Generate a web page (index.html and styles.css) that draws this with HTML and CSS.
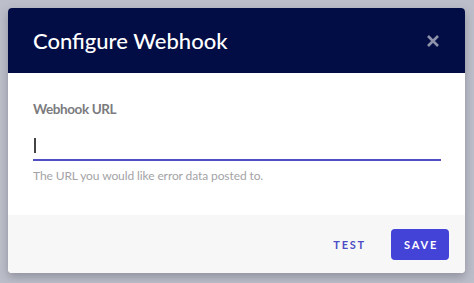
FILE: index.html
```html
<!DOCTYPE html>
<html>
<head>
<meta charset="utf-8">
<link rel="stylesheet" href="styles.css">
</head>
<body>
<div class="modal">
  <div class="modal-header">
    <h1 class="modal-title">Configure Webhook</h1>
    <button class="close-btn" aria-label="Close">
      <svg width="14" height="14" viewBox="0 0 14 14"><path d="M2 2 L12 12 M12 2 L2 12" stroke="#8e92ab" stroke-width="2.6" stroke-linecap="butt"/></svg>
    </button>
  </div>
  <div class="modal-body">
    <label class="field-label">Webhook URL</label>
    <div class="input-wrap"><span class="caret"></span></div>
    <p class="help">The URL you would like error data posted to.</p>
  </div>
  <div class="modal-footer">
    <button class="btn-text">TEST</button>
    <button class="btn-primary">SAVE</button>
  </div>
</div>
</body>
</html>
```
FILE: styles.css
```css
html, body {
  margin: 0;
  padding: 0;
}
body {
  background: #bcbec9;
  font-family: Lato, "Open Sans", "Liberation Sans", sans-serif;
  width: 474px;
  height: 283px;
  overflow: hidden;
  padding-top: 8px;
  box-sizing: border-box;
}
.modal {
  margin: 0 9px 0 8px;
  width: 457px;
  border-radius: 4px;
  overflow: hidden;
  background: #fff;
  box-shadow: 0 4px 10px rgba(60, 62, 80, 0.35);
}
.modal-header {
  height: 65px;
  background: #020d45;
  display: flex;
  align-items: center;
  justify-content: space-between;
  padding: 0 25px;
  box-sizing: border-box;
}
.modal-title {
  margin: 0;
  color: #fff;
  font-size: 22px;
  font-weight: 500;
  letter-spacing: 0;
}
.close-btn {
  background: none;
  border: 0;
  padding: 0;
  width: 14px;
  height: 14px;
  display: flex;
}
.modal-body {
  height: 142px;
  box-sizing: border-box;
  padding: 28px 24px 0 25px;
}
.field-label {
  display: block;
  font-size: 13.5px;
  font-weight: 700;
  color: #7b7b7e;
  line-height: 17px;
  letter-spacing: -0.4px;
}
.input-wrap {
  margin-top: 10px;
  height: 31px;
  border-bottom: 2px solid #4f4fc4;
  display: flex;
  align-items: center;
}
.caret {
  display: block;
  width: 1.5px;
  height: 15px;
  background: #444;
  margin-left: 1px;
  margin-top: 3px;
}
.help {
  margin: 7px 0 0;
  font-size: 12px;
  line-height: 15px;
  color: #a3a3a6;
  letter-spacing: -0.1px;
}
.modal-footer {
  height: 58px;
  background: #f7f7f8;
  display: flex;
  align-items: center;
  justify-content: flex-end;
  padding: 0 16px 0 0;
  box-sizing: border-box;
}
.btn-text, .btn-primary {
  font-family: inherit;
  font-size: 11px;
  font-weight: 700;
  letter-spacing: 1.8px;
  border: 0;
  cursor: pointer;
}
.btn-text {
  background: none;
  color: #4d4dc6;
  padding: 0 12px;
  margin-right: 13px;
}
.btn-primary {
  background: #4343d8;
  color: #fff;
  width: 58px;
  height: 31px;
  border-radius: 4px;
  padding: 0 0 0 2px;
}
```
